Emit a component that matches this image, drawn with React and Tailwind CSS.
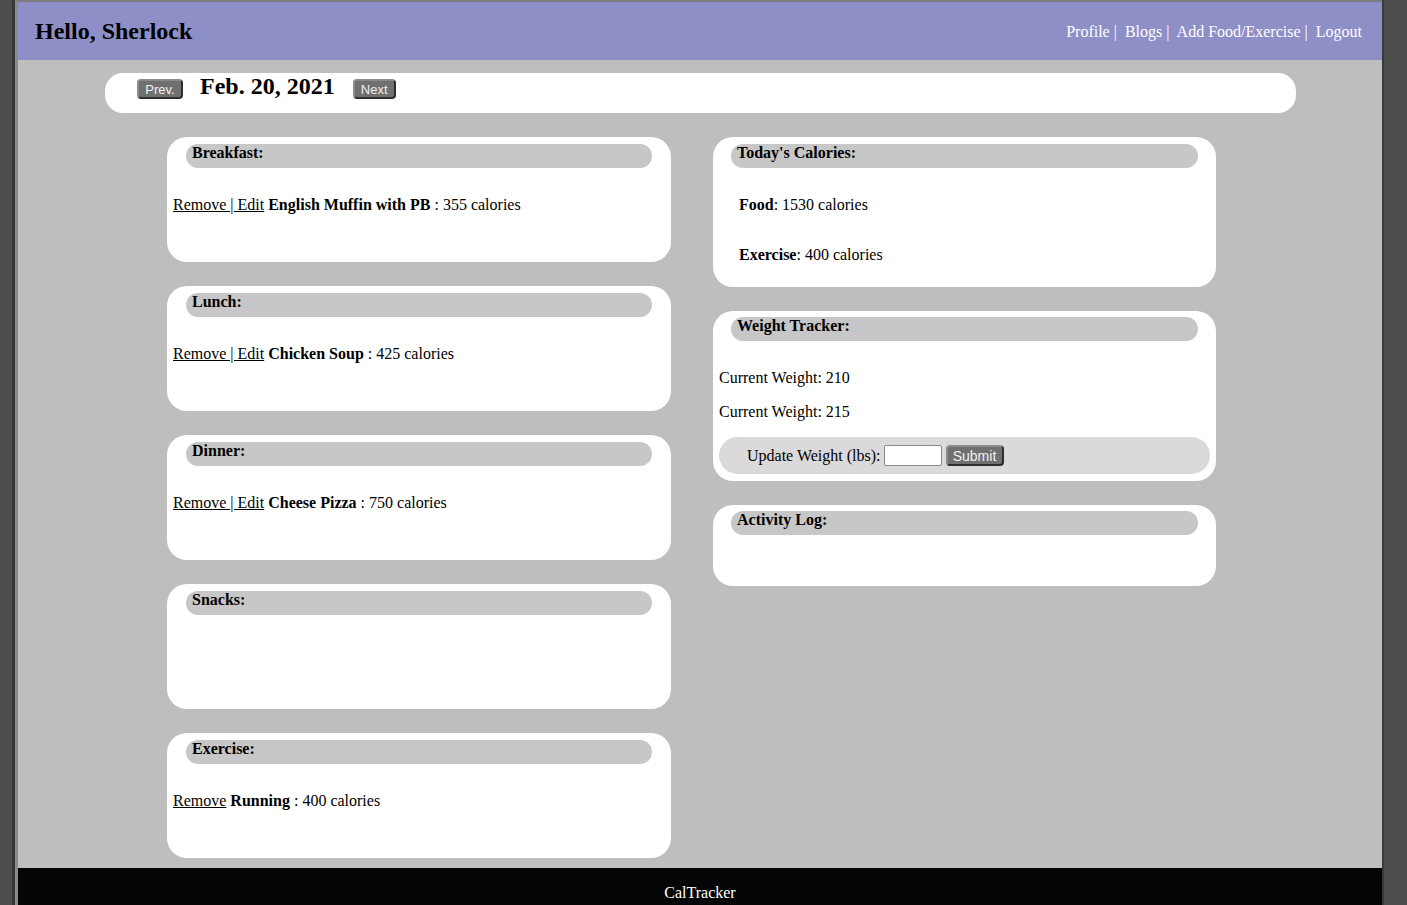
import React from "react";

const serif = { fontFamily: '"Liberation Serif", "Times New Roman", serif' };

function GrayButton({ children, className = "" }) {
  return (
    <button
      className={`bg-[#707070] text-[#f2f2f2] text-[13px] leading-none rounded-[4px] border-2 border-t-[#8a8a8a] border-l-[#8a8a8a] border-b-[#2e2e2e] border-r-[#2e2e2e] ${className}`}
      style={{ fontFamily: '"Liberation Sans", Arial, sans-serif' }}
    >
      {children}
    </button>
  );
}

function Pill({ title, top = "mt-[7px]", mx = "mx-[19px]" }) {
  return (
    <div className={`${top} ${mx} h-[24px] rounded-full bg-[#c8c7c8] pl-[6px] font-bold text-[16px] leading-[18px]`}>
      {title}
    </div>
  );
}

function MealCard({ title, item }) {
  return (
    <section className="bg-white rounded-[20px] w-[504px] h-[125px] pt-px">
      <Pill title={title} top="mt-[6px]" />
      {item && (
        <p className="mt-[28px] pl-[6px] text-[16px] leading-[18px]">
          <span className="underline">{item.edit ? "Remove | Edit" : "Remove"}</span>{" "}
          <b>{item.name}</b> : {item.cal} calories
        </p>
      )}
    </section>
  );
}

const meals = [
  { title: "Breakfast:", item: { name: "English Muffin with PB", cal: 355, edit: true } },
  { title: "Lunch:", item: { name: "Chicken Soup", cal: 425, edit: true } },
  { title: "Dinner:", item: { name: "Cheese Pizza", cal: 750, edit: true } },
  { title: "Snacks:", item: null },
  { title: "Exercise:", item: { name: "Running", cal: 400, edit: false } },
];

export default function App() {
  return (
    <div className="h-[905px] w-[1407px] overflow-hidden bg-[#4d4d4d] flex" style={serif}>
      <div className="ml-[12px] flex border-l-[3px] border-[#363636] border-r-[2px] border-r-[#3a3a3a]">
        <div className="flex flex-col w-[1367px] border-l-[3px] border-l-[#8a8a8a] border-t-[2px] border-t-[#7d7d7d]">
          {/* header */}
          <header className="h-[58px] bg-[#8f8fc7] flex items-center justify-between pl-[17px] pr-[20px]">
            <h1 className="text-[24px] font-bold text-black leading-none">Hello, Sherlock</h1>
            <nav className="text-white text-[16px] leading-none mt-[2px]">
              <a>Profile</a> |&nbsp; <a>Blogs</a> |&nbsp; <a>Add Food/Exercise</a> |&nbsp; <a>Logout</a>
            </nav>
          </header>

          {/* main */}
          <main className="flex-1 bg-[#bebebe] pt-[13px]">
            <div className="ml-[87px] w-[1191px] h-[40px] bg-white rounded-[18px] flex items-start pl-[32px]">
              <GrayButton className="mt-[6px] w-[46px] h-[20px]">Prev.</GrayButton>
              <span className="ml-[17px] text-[24px] leading-[26px] font-bold">Feb. 20, 2021</span>
              <GrayButton className="ml-[18px] mt-[6px] w-[43px] h-[20px]">Next</GrayButton>
            </div>

            <div className="mt-[24px] ml-[149px] flex gap-[42px] items-start">
              <div className="flex flex-col gap-[24px]">
                {meals.map((m) => (
                  <MealCard key={m.title} title={m.title} item={m.item} />
                ))}
              </div>

              <div className="flex flex-col gap-[24px]">
                <section className="bg-white rounded-[20px] w-[503px] h-[150px] pt-px">
                  <Pill title="Today's Calories:" top="mt-[6px]" mx="mx-[18px]" />
                  <p className="mt-[28px] pl-[26px] text-[16px] leading-[18px]">
                    <b>Food</b>: 1530 calories
                  </p>
                  <p className="mt-[32px] pl-[26px] text-[16px] leading-[18px]">
                    <b>Exercise</b>: 400 calories
                  </p>
                </section>

                <section className="bg-white rounded-[20px] w-[503px] h-[170px] pt-px">
                  <Pill title="Weight Tracker:" top="mt-[5px]" mx="mx-[18px]" />
                  <p className="mt-[28px] pl-[6px] text-[16px] leading-[18px]">Current Weight: 210</p>
                  <p className="mt-[16px] pl-[6px] text-[16px] leading-[18px]">Current Weight: 215</p>
                  <form className="mt-[16px] mx-[6px] h-[37px] rounded-full bg-[#dbd9d9] flex items-center pl-[28px] text-[16px]">
                    <label>Update Weight (lbs):</label>
                    <input
                      type="text"
                      className="ml-[3px] w-[58px] h-[21px] bg-white border border-[#8a8a8a] rounded-[2px]"
                    />
                    <GrayButton className="ml-[4px] w-[58px] h-[21px] text-[14px]">Submit</GrayButton>
                  </form>
                </section>

                <section className="bg-white rounded-[20px] w-[503px] h-[81px] pt-px">
                  <Pill title="Activity Log:" top="mt-[5px]" mx="mx-[18px]" />
                </section>
              </div>
            </div>
          </main>

          {/* footer */}
          <footer className="h-[37px] shrink-0 bg-[#050505] text-white text-center text-[16px] leading-[18px] pt-[16px]">
            CalTracker
          </footer>
        </div>
      </div>
    </div>
  );
}
